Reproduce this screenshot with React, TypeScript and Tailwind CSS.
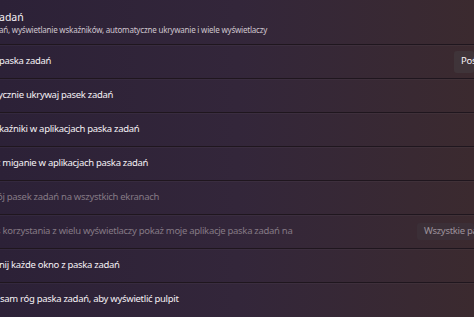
import React from "react";

type Row = {
  label: string;
  indent: string;
  disabled?: boolean;
  control?: string;
};

const rows: Row[] = [
  { label: "paska zadań", indent: "-ml-[1px]", control: "Pośrodku" },
  { label: "ycznie ukrywaj pasek zadań", indent: "-ml-[2px]" },
  { label: "kaźniki w aplikacjach paska zadań", indent: "-ml-[1px]" },
  { label: "ż miganie w aplikacjach paska zadań", indent: "-ml-[4px]" },
  { label: "ój pasek zadań na wszystkich ekranach", indent: "-ml-[3px]", disabled: true },
  {
    label: "s korzystania z wielu wyświetlaczy pokaż moje aplikacje paska zadań na",
    indent: "-ml-[4px]",
    disabled: true,
    control: "Wszystkie paski zadań",
  },
  { label: "nij każde okno z paska zadań", indent: "-ml-[1px]" },
  { label: "sam róg paska zadań, aby wyświetlić pulpit", indent: "ml-0" },
];

function SettingRow({ row }: { row: Row }) {
  return (
    <div className="flex items-center h-[34px] border-t border-[#1f161e] shadow-[inset_0_1px_0_rgba(255,255,255,0.035)]">
      <span
        className={`${row.indent} flex-1 whitespace-nowrap text-[9.5px] tracking-[-0.3px] ${
          row.disabled ? "text-[#857a85]" : "text-[#f5f1f5]"
        }`}
      >
        {row.label}
      </span>
      {row.control && (
        <div
          className={`shrink-0 flex items-center pl-[7px] rounded-[3px] whitespace-nowrap overflow-hidden text-[9.5px] tracking-[-0.3px] ${
            row.disabled
              ? "w-[57px] h-[17px] bg-[#3b2f37] text-[#9d929b]"
              : "w-[20px] h-[22px] bg-[#3f3439] text-[#f5f1f5]"
          }`}
        >
          {row.control}
        </div>
      )}
    </div>
  );
}

export default function App() {
  return (
    <div
      className="w-[474px] h-[317px] overflow-hidden bg-gradient-to-r from-[#2c2137] via-[#33263a] to-[#3b2a2f]"
      style={{ fontFamily: '"Noto Sans", "Open Sans", sans-serif' }}
    >
      {/* Expander header */}
      <div className="h-[44px] flex flex-col justify-center -ml-[1px] pt-[2px]">
        <div className="text-[10.5px] leading-[14px] text-[#f5f1f5]">adań</div>
        <div className="text-[8px] leading-[12px] tracking-[-0.2px] text-[#cfc6cf] whitespace-nowrap">
          ań, wyświetlanie wskaźników, automatyczne ukrywanie i wiele wyświetlaczy
        </div>
      </div>

      {/* Settings rows */}
      <div className="flex flex-col">
        {rows.map((row) => (
          <SettingRow key={row.label} row={row} />
        ))}
      </div>
    </div>
  );
}
